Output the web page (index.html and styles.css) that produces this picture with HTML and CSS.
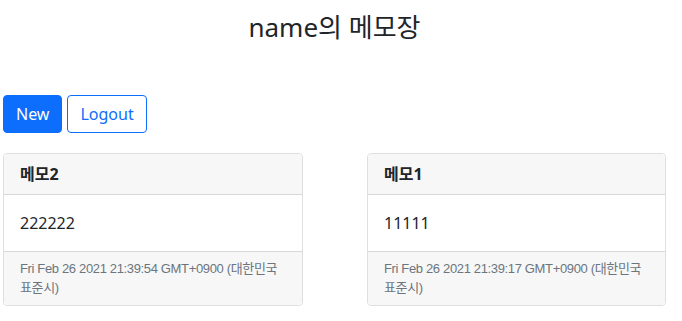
FILE: index.html
```html
<!DOCTYPE html>
<html lang="ko">
<head>
    <meta charset="UTF-8">
    <meta name="viewport" content="width=device-width, initial-scale=1.0">
    <title>메모장</title>
    <link rel="stylesheet" href="styles.css">
</head>
<body>
    <h1 class="title">name의 메모장</h1>

    <div class="actions">
        <button type="button" class="btn btn-primary">New</button>
        <button type="button" class="btn btn-outline">Logout</button>
    </div>

    <div class="memo-list">
        <div class="card">
            <div class="card-header">메모2</div>
            <div class="card-body">222222</div>
            <div class="card-footer">Fri Feb 26 2021 21:39:54 GMT+0900 (대한민국 표준시)</div>
        </div>

        <div class="card">
            <div class="card-header">메모1</div>
            <div class="card-body">11111</div>
            <div class="card-footer">Fri Feb 26 2021 21:39:17 GMT+0900 (대한민국 표준시)</div>
        </div>
    </div>
</body>
</html>
```

FILE: styles.css
```css
body {
    font-family: "Noto Sans", "Noto Sans CJK KR", sans-serif;
    margin: 0;
    padding: 0 3px;
    color: #212529;
    background-color: #ffffff;
}

.title {
    margin: 12px 13px 0 0;
    font-size: 26px;
    font-weight: 400;
    line-height: 1.2;
    text-align: center;
}

.actions {
    display: flex;
    gap: 5px;
    margin-top: 52px;
}

.btn {
    font-family: inherit;
    font-size: 16px;
    line-height: 24px;
    padding: 6px 12px;
    border-radius: 4px;
    border: 1px solid #0d6efd;
    cursor: pointer;
}

.btn-primary {
    background: #0d6efd;
    color: #ffffff;
}

.btn-outline {
    background: #ffffff;
    color: #0d6efd;
}

.memo-list {
    display: grid;
    grid-template-columns: 300px 299px;
    column-gap: 64px;
    margin-top: 20px;
}

.card {
    border: 1px solid rgba(0, 0, 0, 0.125);
    border-radius: 4px;
    overflow: hidden;
}

.card-header {
    background: #f7f7f7;
    padding: 8px 16px;
    font-weight: 700;
    line-height: 24px;
    border-bottom: 1px solid rgba(0, 0, 0, 0.125);
}

.card-body {
    padding: 16px;
    line-height: 24px;
}

.card-footer {
    background: #f7f7f7;
    padding: 7px 16px 8px;
    font-family: "Liberation Sans", "Noto Sans CJK KR", sans-serif;
    font-size: 13px;
    line-height: 19px;
    letter-spacing: -0.35px;
    color: #6c757d;
    word-break: keep-all;
    border-top: 1px solid rgba(0, 0, 0, 0.125);
}
```
